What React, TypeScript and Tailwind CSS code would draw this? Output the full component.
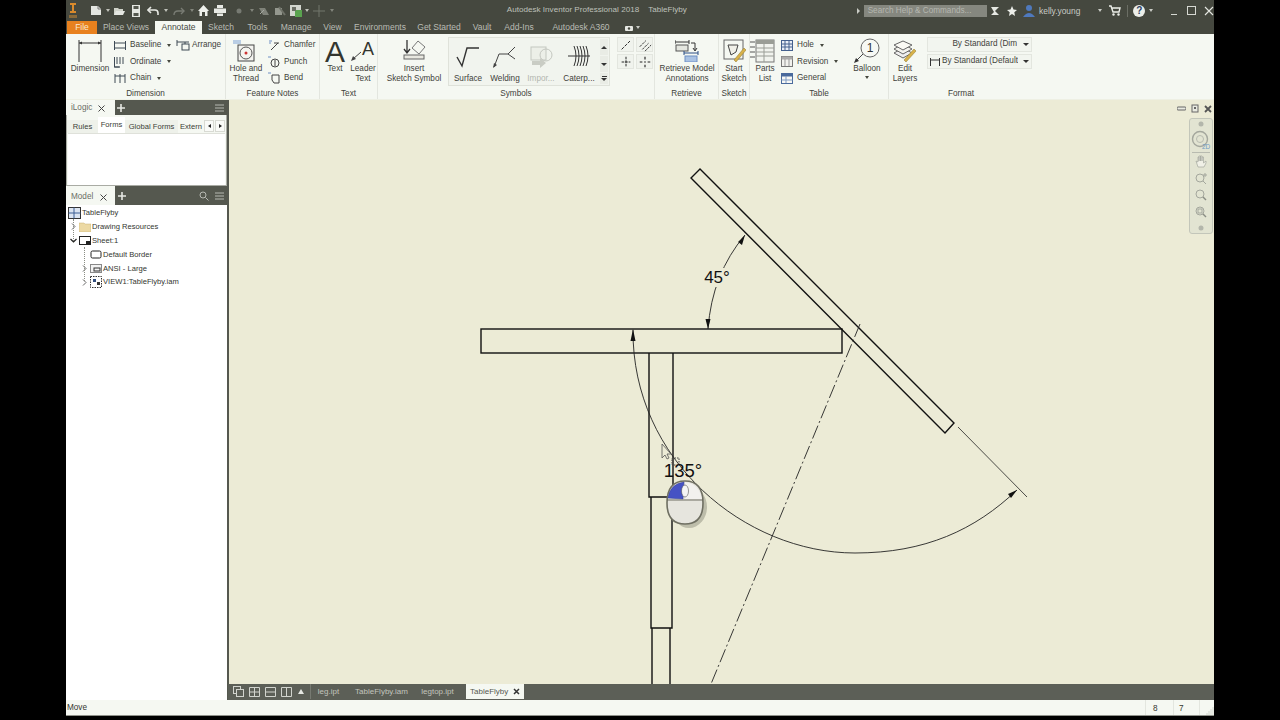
import React from "react";

const font = { fontFamily: '"Liberation Sans", Arial, sans-serif' };

function Caret({ className = "" }: { className?: string }) {
  return <span className={`inline-block w-0 h-0 border-l-[2px] border-r-[2px] border-t-[3px] border-l-transparent border-r-transparent border-t-current ${className}`} />;
}

function Ic({ w = 12, h = 12, vb, children, className = "" }: { w?: number; h?: number; vb?: string; children: React.ReactNode; className?: string }) {
  return (
    <svg width={w} height={h} viewBox={vb ?? `0 0 ${w} ${h}`} fill="none" className={`shrink-0 ${className}`}>
      {children}
    </svg>
  );
}

/* ---------- quick access icons ---------- */
const Q = {
  logo: (
    <Ic w={12} h={20}>
      <path d="M3 3h6M3 11h6M6 3v8" stroke="#d98a2c" strokeWidth="2" />
      <rect x="2" y="14" width="8" height="3" fill="#8a6a3a" />
    </Ic>
  ),
  doc: <Ic w={12} h={11}><path d="M1 1h7l3 3v6H1z" fill="#e4e6e1" /><path d="M8 1v3h3" stroke="#777" /></Ic>,
  open: <Ic w={12} h={10}><path d="M1 2h4l1 1h4v2H4L2 9H1z" fill="#cfd2c9" /><path d="M3 5h9l-2 4H1z" fill="#e4e6e1" /></Ic>,
  save: <Ic w={10} h={12}><rect x="1" y="0" width="8" height="12" fill="#e6e8e3" /><rect x="2.5" y="1" width="5" height="3" fill="#55584f" /><rect x="2.5" y="8" width="5" height="3" fill="#55584f" /></Ic>,
  undo: <Ic w={12} h={10}><path d="M4 1 1 4l3 3" stroke="#e6e8e3" strokeWidth="1.6" /><path d="M1.5 4H8q3 0 3 3v2" stroke="#e6e8e3" strokeWidth="1.6" /></Ic>,
  redo: <Ic w={12} h={10}><path d="M8 2l3 3-3 3" stroke="#797c74" strokeWidth="1.4" /><path d="M10.5 5H5Q1 5 1 9" stroke="#797c74" strokeWidth="1.4" /></Ic>,
  home: <Ic w={11} h={11}><path d="M5.5 0 11 6H9.5v5H7V7H4v4H1.5V6H0z" fill="#eef0ec" /></Ic>,
  print: <Ic w={12} h={11}><rect x="3" y="0" width="6" height="3" fill="#e8eae5" /><rect x="0" y="3.5" width="12" height="4.5" fill="#e8eae5" /><rect x="3" y="8.5" width="6" height="2.5" fill="#e8eae5" /></Ic>,
  dot: <Ic w={8} h={8}><circle cx="4" cy="4" r="2.5" fill="#777a72" /></Ic>,
  a: <Ic w={12} h={10}><path d="M1 2h6l4 7H5z" fill="#7f8279" /><path d="M2 8l4-4" stroke="#a4a79f" /></Ic>,
  b: <Ic w={12} h={10}><rect x="1" y="2" width="7" height="7" fill="#94978e" /><path d="M5 1l6 8" stroke="#6e7168" strokeWidth="2" /></Ic>,
  c: <Ic w={13} h={14}><rect x="0" y="1" width="11" height="11" fill="#d3d6cf" /><rect x="5" y="6" width="7" height="7" fill="#5aa34f" /><rect x="2" y="3" width="4" height="4" fill="#6c6f66" /></Ic>,
  plus: <Ic w={12} h={12}><path d="M6 0v12M0 6h12" stroke="#73766d" /></Ic>,
};

function Slot({ c, w }: { c: React.ReactNode; w: string }) {
  return <div className={`flex items-center justify-center ${w}`}>{c}</div>;
}

function TitleBar() {
  return (
    <div className="h-[21px] bg-[#45483f] flex items-center text-[#c9cbc5] relative">
      <Slot w="w-[1px]" c={null} />
      <Slot w="w-[12px]" c={Q.logo} />
      <Slot w="w-[11px]" c={null} />
      <Slot w="w-[13px]" c={Q.doc} />
      <Slot w="w-[10px]" c={<Caret className="text-[#bfc1ba]" />} />
      <Slot w="w-[14px]" c={Q.open} />
      <Slot w="w-[20px]" c={Q.save} />
      <Slot w="w-[14px]" c={Q.undo} />
      <Slot w="w-[12px]" c={<Caret className="text-[#bfc1ba]" />} />
      <Slot w="w-[15px]" c={Q.redo} />
      <Slot w="w-[11px]" c={<Caret className="text-[#82857c]" />} />
      <Slot w="w-[13px]" c={Q.home} />
      <Slot w="w-[19px]" c={Q.print} />
      <Slot w="w-[19px]" c={Q.dot} />
      <Slot w="w-[9px]" c={<Caret className="text-[#82857c]" />} />
      <Slot w="w-[15px]" c={Q.a} />
      <Slot w="w-[17px]" c={Q.b} />
      <Slot w="w-[16px]" c={Q.c} />
      <Slot w="w-[6px]" c={<Caret className="text-[#bfc1ba]" />} />
      <Slot w="w-[17px]" c={Q.plus} />
      <Slot w="w-[11px]" c={<Caret className="text-[#82857c]" />} />
      <div className="w-[171px]" />
      <div className="w-[300px] text-[8.1px] leading-none text-[#bec0ba] whitespace-nowrap">
        Autodesk Inventor Professional 2018<span className="ml-[9px]">TableFlyby</span>
      </div>
      <div className="w-[54px]" />
      <span className="w-0 h-0 border-y-[3px] border-l-[3px] border-y-transparent border-l-[#c9cbc5] mr-[4px]" />
      <div className="w-[125px] h-[12px] bg-[#85877f] text-[#b5b7b0] text-[8.2px] leading-[12px] pl-[4px] whitespace-nowrap overflow-hidden">Search Help &amp; Commands...</div>
      <div className="w-[3px]" />
      <Ic w={10} h={10}><path d="M1 1h8L5 5l4 4H1l3-3" fill="#e6e8e3" /></Ic>
      <div className="w-[7px]" />
      <Ic w={10} h={10}><path d="M5 0l1.5 3.5L10 4 7.3 6.3 8 10 5 8 2 10l.7-3.7L0 4l3.5-.5z" fill="#eceee9" /></Ic>
      <div className="w-[6px]" />
      <Ic w={12} h={13}><circle cx="6" cy="4" r="3" fill="#4f79bd" /><path d="M0 13q6-8 12 0z" fill="#4f79bd" /></Ic>
      <span className="ml-[4px] mt-[1px] w-[60px] text-[8.4px] leading-none text-[#c9cbc5]">kelly.young</span>
      <Caret className="text-[#c9cbc5] mr-[7px]" />
      <Ic w={12} h={11}><path d="M0 1h2l2 6h6l1-4H3" stroke="#eceee9" strokeWidth="1.4" /><circle cx="4.5" cy="9.5" r="1.2" fill="#eceee9" /><circle cx="9.5" cy="9.5" r="1.2" fill="#eceee9" /></Ic>
      <div className="ml-[6px] mr-[5px] w-px h-[12px] bg-[#6b6e65]" />
      <div className="w-[12px] h-[12px] rounded-full bg-[#eceee9] text-[#2c3e66] text-[10px] font-bold leading-[12px] text-center">?</div>
      <Caret className="text-[#c9cbc5] ml-[4px] mr-[18px]" />
      <div className="w-[6px] h-px bg-[#d6d8d2] mt-[7px] mr-[10px]" />
      <div className="w-[9px] h-[9px] border border-[#d6d8d2] mr-[8px]" />
      <Ic w={10} h={10}><path d="M1 1l8 8M9 1 1 9" stroke="#e6e8e3" strokeWidth="1.1" /></Ic>
    </div>
  );
}

function TabBar() {
  const tabs: [string, string][] = [
    ["Place Views", "w-[58px]"],
    ["Annotate", "w-[47px]"],
    ["Sketch", "w-[38px]"],
    ["Tools", "w-[35px]"],
    ["Manage", "w-[42px]"],
    ["View", "w-[31px]"],
    ["Environments", "w-[64px]"],
    ["Get Started", "w-[54px]"],
    ["Vault", "w-[32px]"],
    ["Add-Ins", "w-[42px]"],
    ["Autodesk A360", "w-[82px]"],
  ];
  return (
    <div className="h-[13px] bg-[#45483f] flex items-stretch text-[8.5px] leading-[13px] text-center text-[#b9bbb4]">
      <div className="w-px" />
      <div className="w-[30px] bg-[#e8811e] text-[#fbe9d2]">File</div>
      {tabs.map(([t, w]) => (
        <div key={t} className={`${w} whitespace-nowrap ${t === "Annotate" ? "bg-[#f5f8f2] text-[#45483f]" : ""}`}>{t}</div>
      ))}
      <div className="flex items-center ml-[3px] gap-[3px]">
        <Ic w={8} h={6}><rect x="0" y="1" width="8" height="5" rx="1" fill="#e6e8e3" /><circle cx="4" cy="3.5" r="1.2" fill="#45483f" /></Ic>
        <Caret className="text-[#c9cbc5]" />
      </div>
    </div>
  );
}

/* ---------- ribbon ---------- */
function Big({ icon, lines, w, caret, tall, muted }: { icon: React.ReactNode; lines: string[]; w: string; caret?: boolean; tall?: boolean; muted?: boolean }) {
  return (
    <div className={`${w} flex flex-col items-center shrink-0`}>
      <div className={`${tall ? "h-[36px]" : "h-[27px]"} flex items-center justify-center`}>{icon}</div>
      <div className={`text-[8.2px] leading-[10px] text-center whitespace-nowrap ${muted ? "text-[#b3b6ae]" : "text-[#3f423b]"}`}>
        {lines.map((l) => <div key={l}>{l}</div>)}
      </div>
      {caret && <Caret className="text-[#45483f] mt-[2px]" />}
    </div>
  );
}

function Small({ icon, text, caret }: { icon: React.ReactNode; text: string; caret?: boolean }) {
  return (
    <div className="h-[16.5px] flex items-center whitespace-nowrap text-[8.2px] text-[#3f423b]">
      <span className="w-[16px] flex justify-start">{icon}</span>
      <span>{text}</span>
      {caret && <Caret className="ml-[6px] text-[#45483f]" />}
    </div>
  );
}

function Group({ label, w, children, last }: { label: string; w: string; children: React.ReactNode; last?: boolean }) {
  return (
    <div className={`${w} shrink-0 flex flex-col ${last ? "" : "border-r border-[#e3e6df]"}`}>
      <div className="h-[53px] flex items-start pt-[3px]">{children}</div>
      <div className="text-[8.2px] leading-[11px] mt-[1px] text-center text-[#3f423b]">{label}</div>
    </div>
  );
}

const ink = "#3e4a55";
const I = {
  dim: <Ic w={24} h={22}><path d="M1 3h22" stroke="#333" /><path d="M1 3l3-1.5v3zM23 3l-3-1.5v3z" fill="#333" /><path d="M1 0v22" stroke="#333" /><path d="M23 0v22" stroke="#333" /></Ic>,
  base: <Ic w={12} h={11}><path d="M.5 1v9M11.5 1v9M.5 3h11M.5 8h11" stroke={ink} /></Ic>,
  ord: <Ic w={12} h={12}><path d="M.5 1v10h5M3 1v7M6 1v7M9 1v7M0 11h6" stroke={ink} /></Ic>,
  chain: <Ic w={12} h={11}><path d="M1 1v9M6 1v9M11 1v9M1 3h10" stroke={ink} /></Ic>,
  arr: <Ic w={14} h={12}><path d="M1 1v6M1 3h12" stroke={ink} /><rect x="6" y="5" width="7" height="6" stroke={ink} /><path d="M9 3v2" stroke={ink} /></Ic>,
  hole: (
    <Ic w={26} h={22}>
      <path d="M0 1h8M0 3h8" stroke="#7fa3d6" />
      <rect x="5" y="5" width="16" height="16" stroke="#444" fill="#f4f4f0" />
      <circle cx="13" cy="13" r="6" stroke="#555" />
      <circle cx="13" cy="13" r="1.5" fill="#cc3333" />
    </Ic>
  ),
  cham: <Ic w={12} h={11}><path d="M1 1h3M1 3h2" stroke="#6f8fc4" /><path d="M3 10l7-7M6 3h5" stroke="#444" /></Ic>,
  punch: <Ic w={12} h={12}><path d="M0 1h3" stroke="#6f8fc4" /><circle cx="7" cy="7" r="4" stroke="#444" /><path d="M7 4v6" stroke="#444" /></Ic>,
  bend: <Ic w={12} h={12}><path d="M0 1h3" stroke="#6f8fc4" /><path d="M4 3h7v8H6L4 8z" stroke="#444" /></Ic>,
  bigA: <Ic w={24} h={24} className="overflow-visible"><text x="12" y="23" textAnchor="middle" fontSize="30" fill="#33362f" style={font}>A</text></Ic>,
  leader: (
    <Ic w={26} h={24} className="overflow-visible">
      <path d="M3 20 11 13" stroke="#444" />
      <path d="M1 22l2-5 3 3z" fill="#444" />
      <text x="18" y="16" textAnchor="middle" fontSize="18" fill="#33362f" style={font}>A</text>
    </Ic>
  ),
  sketch: (
    <Ic w={24} h={22}>
      <path d="M5 0v12M2 9l3 4 3-4" stroke="#333" strokeWidth="1.3" />
      <path d="M16 1l7 6-6 7-7-6z" stroke="#777" />
      <rect x="2" y="15" width="20" height="4" stroke="#666" fill="#e8e8e0" />
    </Ic>
  ),
  surface: <Ic w={24} h={24}><path d="M1 13l5 9L11 4h12" stroke="#333" strokeWidth="1.4" /></Ic>,
  weld: <Ic w={24} h={24}><path d="M1 23 6 10h9l7-7M15 10l7 5" stroke="#444" /><path d="M0 24l1-5 3 2z" fill="#444" /></Ic>,
  imp: <Ic w={24} h={24}><rect x="2" y="3" width="15" height="13" stroke="#c4c7c0" fill="#ecefe8" /><circle cx="17" cy="11" r="6" stroke="#c4c7c0" /><path d="M3 17h8v-3l6 5-6 5v-3H3z" fill="#c9ccc4" /></Ic>,
  cat: <Ic w={22} h={22}><path d="M0 11h22" stroke="#333" /><path d="M6 1q4 10 0 20M9 1q4 10 0 20M12 1q4 10 0 20M15 1q4 10 0 20M18 1q4 10 0 20" stroke="#333" /></Ic>,
  retrieve: (
    <Ic w={24} h={22}>
      <path d="M0 2h14M0 0v4M14 0v4" stroke="#333" />
      <rect x="1" y="5" width="12" height="6" fill="#e4e6df" stroke="#555" />
      <path d="M16 3h4v7M18 8l2 3 2-3" stroke="#333" />
      <path d="M9 13h14M9 11v4M23 11v4" stroke="#2b4f86" />
      <rect x="10" y="16" width="12" height="6" fill="#a9c2e3" stroke="#6f8fc4" />
    </Ic>
  ),
  start: (
    <Ic w={24} h={24}>
      <rect x="2" y="1" width="19" height="19" stroke="#666" />
      <path d="M6 6h10l-2 7-5 3z" stroke="#444" fill="#f0f0e8" />
      <path d="M12 21 22 9l2 2-10 12z" fill="#d8b24a" stroke="#8d7428" strokeWidth=".5" />
    </Ic>
  ),
  parts: (
    <Ic w={30} h={24}>
      <path d="M0 3h5M0 8h5M0 13h5M0 18h5" stroke="#555" />
      <rect x="6" y="1" width="18" height="22" fill="#f1f3ee" stroke="#777" />
      <rect x="6" y="1" width="18" height="4" fill="#9a9d96" />
      <path d="M6 9h18M6 13h18M6 17h18M14 1v22" stroke="#9a9d96" />
    </Ic>
  ),
  tHole: <Ic w={12} h={11}><rect x=".5" y=".5" width="11" height="10" fill="#e9eef6" stroke="#44608e" /><path d="M.5 4h11M.5 7h11M4 .5v10M8 .5v10" stroke="#44608e" /></Ic>,
  tRev: <Ic w={12} h={11}><rect x=".5" y=".5" width="11" height="10" fill="#f2f2ee" stroke="#777" /><rect x=".5" y=".5" width="11" height="3" fill="#aaa" /><path d="M4 3v7M8 3v7" stroke="#999" /></Ic>,
  tGen: <Ic w={12} h={11}><rect x=".5" y=".5" width="11" height="10" fill="#f8f8f4" stroke="#4a6a9c" /><rect x=".5" y=".5" width="11" height="3" fill="#4a6a9c" /><path d="M.5 7h11M5 3v7" stroke="#7f9bc4" /></Ic>,
  balloon: (
    <Ic w={26} h={26}>
      <circle cx="16" cy="10" r="9" stroke="#666" fill="#f7f9f4" />
      <path d="M9 16 2 23" stroke="#444" />
      <path d="M0 25l2-5 3 3z" fill="#333" />
      <text x="16" y="14" textAnchor="middle" fontSize="12" fill="#333" style={font}>1</text>
    </Ic>
  ),
  layers: (
    <Ic w={24} h={22}>
      <path d="M1 13l9-5 9 5-9 5z" stroke="#666" fill="#eee" />
      <path d="M1 9l9-5 9 5-9 5z" stroke="#666" fill="#f4f4ee" />
      <path d="M1 5l9-4 9 4-9 5z" stroke="#666" fill="#fafaf4" />
      <path d="M11 20l10-11 2 2-10 11z" fill="#d8b24a" stroke="#8d7428" strokeWidth=".5" />
    </Ic>
  ),
};

const tiles = [
  <path key="a" d="M3 13 13 3" stroke="#222" strokeWidth="1.1" strokeDasharray="3.5 1.5" />,
  <path key="b" d="M2 10l7-7M5 13l7-7M8 15l7-7" stroke="#333" strokeWidth="1.1" strokeDasharray="3 1" />,
  <path key="c" d="M8 2v12M3 8h10" stroke="#222" strokeWidth="1.1" strokeDasharray="3 1" />,
  <path key="d" d="M8 2v3M8 11v3M2 8h3M11 8h3M7 8h2" stroke="#222" strokeWidth="1.3" />,
];

function Ribbon() {
  return (
    <div className="h-[66px] bg-[#f5f8f2] flex border-b border-[#eef0e4]">
      <Group label="Dimension" w="w-[160px]">
        <div className="pl-[2px]"><Big w="w-[44px]" icon={I.dim} lines={["Dimension"]} /></div>
        <div className="ml-[2px] w-[62px] shrink-0">
          <Small icon={I.base} text="Baseline" caret />
          <Small icon={I.ord} text="Ordinate" caret />
          <Small icon={I.chain} text="Chain" caret />
        </div>
        <div><Small icon={I.arr} text="Arrange" /></div>
      </Group>
      <Group label="Feature Notes" w="w-[94px]">
        <Big w="w-[40px]" icon={I.hole} lines={["Hole and", "Thread"]} />
        <div className="ml-[2px]">
          <Small icon={I.cham} text="Chamfer" />
          <Small icon={I.punch} text="Punch" />
          <Small icon={I.bend} text="Bend" />
        </div>
      </Group>
      <Group label="Text" w="w-[58px]">
        <Big w="w-[30px]" icon={I.bigA} lines={["Text"]} />
        <Big w="w-[26px]" icon={I.leader} lines={["Leader", "Text"]} />
      </Group>
      <Group label="Symbols" w="w-[277px]">
        <div className="w-[70px] shrink-0 pl-[1px]"><Big w="w-[70px]" icon={I.sketch} lines={["Insert", "Sketch Symbol"]} /></div>
        <div className="w-[162px] h-[49px] bg-[#f1f4ee] border border-[#dfe2da] flex shrink-0">
          <Big tall w="w-[38px]" icon={I.surface} lines={["Surface"]} />
          <Big tall w="w-[36px]" icon={I.weld} lines={["Welding"]} />
          <Big tall muted w="w-[36px]" icon={I.imp} lines={["Impor..."]} />
          <Big tall w="w-[40px]" icon={I.cat} lines={["Caterp..."]} />
          <div className="flex-1 flex flex-col text-[#333] gap-px p-px">
            <div className="flex-[3] bg-[#e9ece5] flex items-center justify-center"><span className="w-0 h-0 border-x-[3px] border-b-[3px] border-x-transparent border-b-current" /></div>
            <div className="flex-[3] bg-[#e9ece5] flex items-center justify-center"><Caret className="border-l-[3px] border-r-[3px]" /></div>
            <div className="flex-[2] bg-[#e9ece5] flex flex-col items-center justify-center"><div className="w-[5px] h-px bg-current mb-px" /><Caret className="border-l-[3px] border-r-[3px]" /></div>
          </div>
        </div>
        <div className="ml-[7px] grid grid-cols-2 gap-[2px] w-[36px] shrink-0">
          {tiles.map((p) => (
            <div key={p.key} className="h-[15px] bg-[#f0f3ed] border border-[#e3e6df] flex items-center justify-center">
              <Ic w={14} h={14} vb="0 0 16 16">{p}</Ic>
            </div>
          ))}
        </div>
      </Group>
      <Group label="Retrieve" w="w-[64px]"><Big w="w-[64px]" icon={I.retrieve} lines={["Retrieve Model", "Annotations"]} /></Group>
      <Group label="Sketch" w="w-[31px]"><Big w="w-[30px]" icon={I.start} lines={["Start", "Sketch"]} /></Group>
      <Group label="Table" w="w-[139px]">
        <div className="w-[30px] shrink-0"><Big w="w-[30px]" icon={I.parts} lines={["Parts", "List"]} /></div>
        <div className="ml-[1px] w-[64px] shrink-0">
          <Small icon={I.tHole} text="Hole" caret />
          <Small icon={I.tRev} text="Revision" caret />
          <Small icon={I.tGen} text="General" />
        </div>
        <Big w="w-[44px]" icon={I.balloon} lines={["Balloon"]} caret />
      </Group>
      <Group label="Format" w="w-[144px]" last>
        <div className="ml-[3px]"><Big w="w-[26px]" icon={I.layers} lines={["Edit", "Layers"]} /></div>
        <div className="ml-[9px] w-[105px] flex flex-col gap-[2px] text-[8.2px] text-[#3f423b]">
          <div className="h-[15px] bg-[#f2f5ef] border border-[#e3e6df] flex items-center justify-end pr-[2px] whitespace-nowrap">
            <span className="w-[76px] text-right overflow-hidden">By Standard (Dim</span><Caret className="ml-[6px] text-[#333] border-l-[3px] border-r-[3px]" />
          </div>
          <div className="h-[15px] bg-[#f2f5ef] border border-[#e3e6df] flex items-center pl-[2px] pr-[2px] whitespace-nowrap">
            <Ic w={10} h={9} className="mr-[2px]"><path d="M.5 1v8M9.5 1v8M.5 3h9" stroke="#333" /></Ic>
            <span className="w-[76px] overflow-hidden">By Standard (Default</span><Caret className="ml-auto text-[#333] border-l-[3px] border-r-[3px]" />
          </div>
        </div>
      </Group>
    </div>
  );
}

/* ---------- side panels ---------- */
function PanelHead({ name, search, h, pt, pr, plus }: { name: string; search?: boolean; h: string; pt: string; pr: string; plus: string }) {
  return (
    <div className={`${h} flex items-stretch bg-[#55584f]`}>
      <div className={`w-[49px] bg-[#f5f8f2] flex items-center text-[8.2px] text-[#6a6d65] pl-[5px] justify-between ${pt} ${pr}`}>
        {name}
        <Ic w={7} h={7}><path d="M.5.5l6 6M6.5.5l-6 6" stroke="#444" /></Ic>
      </div>
      <Ic w={8} h={8} className={`self-center ${plus}`}><path d="M4 0v8M0 4h8" stroke="#e6e8e3" strokeWidth="1.6" /></Ic>
      <div className="flex-1" />
      {search && (
        <Ic w={10} h={10} className="self-center mr-[6px]"><circle cx="4" cy="4" r="3" stroke="#b7b9b3" /><path d="M6.5 6.5l3 3" stroke="#b7b9b3" /></Ic>
      )}
      <Ic w={9} h={8} className="self-center mr-[3px]"><path d="M0 1h9M0 4h9M0 7h9" stroke="#b7b9b3" /></Ic>
    </div>
  );
}

function TreeRow({ pad, icon, text, arrow }: { pad: string; icon: React.ReactNode; text: string; arrow?: "r" | "d" }) {
  return (
    <div className={`h-[13.8px] flex items-center whitespace-nowrap ${pad}`}>
      <span className="w-[8px] shrink-0 flex justify-center">
        {arrow === "r" && <Ic w={5} h={7}><path d="M1 .5l3 3-3 3" stroke="#666" /></Ic>}
        {arrow === "d" && <Ic w={7} h={5}><path d="M.5 1l3 3 3-3" stroke="#222" strokeWidth="1.2" /></Ic>}
      </span>
      <span className="w-[12px] ml-[2px] shrink-0 flex justify-center">{icon}</span>
      <span className="ml-[1px]">{text}</span>
    </div>
  );
}

function Left() {
  return (
    <div className="w-[162px] shrink-0 flex flex-col bg-white border-r border-[#55584f] text-[#3a3d36]">
      <PanelHead name="iLogic" h="h-[15px]" pt="pt-[2px]" pr="pr-[10px]" plus="ml-[2px]" />
      <div className="h-[71px] bg-[#f5f8f2] border-x border-b border-[#a9aba4] flex flex-col">
        <div className="h-[18px] flex items-end text-[7.6px] leading-[13px] relative whitespace-nowrap overflow-hidden">
          <div className="w-[31px] text-center h-[13px] bg-[#eef1ea]">Rules</div>
          <div className="w-[27px] text-center h-[16px] bg-white pt-[1px]">Forms</div>
          <div className="w-[53px] text-center h-[13px] bg-[#eef1ea]">Global Forms</div>
          <div className="w-[26px] pl-[2px] h-[13px] overflow-hidden">Extern</div>
          <div className="flex gap-[1px] mb-[1px]">
            <div className="w-[10px] h-[12px] bg-[#fafbf8] border border-[#d8dad3] flex items-center justify-center"><span className="w-0 h-0 border-y-[2px] border-r-[3px] border-y-transparent border-r-[#222]" /></div>
            <div className="w-[10px] h-[12px] bg-[#fafbf8] border border-[#d8dad3] flex items-center justify-center"><span className="w-0 h-0 border-y-[2px] border-l-[3px] border-y-transparent border-l-[#222]" /></div>
          </div>
        </div>
        <div className="flex-1 bg-white border-t border-[#dfe1da] mx-px" />
      </div>
      <PanelHead name="Model" search h="h-[19px]" pt="pt-[3px]" pr="pr-[8px]" plus="ml-[3px]" />
      <div className="flex-1 pt-[1px] text-[7.6px] text-[#33362f] relative">
        <div className="absolute left-[7px] top-[14px] h-[24px] border-l border-dotted border-[#8a8d84]" />
        <div className="absolute left-[18px] top-[42px] h-[34px] border-l border-dotted border-[#8a8d84]" />
        <div className="h-[14px] flex items-center pl-[2px] whitespace-nowrap">
          <Ic w={13} h={12}><rect x=".5" y=".5" width="12" height="11" fill="#dbe4f1" stroke="#333" /><path d="M.5 6h12M6 .5v11" stroke="#3c5e94" /></Ic>
          <span className="ml-[1px]">TableFlyby</span>
        </div>
        <TreeRow pad="pl-[3px]" arrow="r" text="Drawing Resources" icon={<Ic w={12} h={10}><path d="M0 1h5l1 1h6v8H0z" fill="#ecd9a4" stroke="#c9b077" strokeWidth=".5" /></Ic>} />
        <TreeRow pad="pl-[3px]" arrow="d" text="Sheet:1" icon={<Ic w={12} h={9}><rect x=".5" y=".5" width="11" height="8" fill="#fff" stroke="#222" /><rect x="7" y="5" width="4" height="3" fill="#222" /></Ic>} />
        <TreeRow pad="pl-[14px]" text="Default Border" icon={<Ic w={12} h={9}><rect x="1" y="1" width="10" height="7" rx="1.5" fill="#fff" stroke="#222" /></Ic>} />
        <TreeRow pad="pl-[14px]" arrow="r" text="ANSI - Large" icon={<Ic w={12} h={9}><rect x=".5" y=".5" width="11" height="8" fill="#f2f2f2" stroke="#888" /><rect x="4" y="4" width="6" height="3" stroke="#333" /></Ic>} />
        <TreeRow pad="pl-[14px]" arrow="r" text="VIEW1:TableFlyby.iam" icon={<Ic w={12} h={12}><rect x=".5" y=".5" width="11" height="11" stroke="#333" strokeDasharray="1.5 1" /><rect x="3" y="3" width="3" height="3" fill="#2f4c7c" /><rect x="7" y="6" width="3" height="3" fill="#333" /></Ic>} />
      </div>
    </div>
  );
}

/* ---------- drawing ---------- */
function Drawing() {
  const k = "#111";
  return (
    <svg viewBox="229 100 985 584" className="block w-full h-full absolute inset-0" fill="none" style={font}>
      <polygon points="691,178 700,169 954,423 945,433" stroke={k} strokeWidth="1.4" />
      <rect x="481" y="329" width="361" height="24" stroke={k} strokeWidth="1.4" />
      <path d="M649 353V497H673V353M651 497V628H672V497M652 628V684M670 628V684" stroke={k} strokeWidth="1.4" />
      <path d="M860 324L711 684" stroke="#222" strokeWidth=".9" strokeDasharray="14 3 2 3" />
      <path d="M958 427L1027 497" stroke="#222" strokeWidth=".8" />
      <path d="M708 329Q712 274 745 235" stroke="#222" strokeWidth=".9" />
      <path d="M708 329l-2.5-10h5zM745 235l-3 10 -4-3z" fill={k} />
      <path d="M633 330C632 460 745 553 855 553C925 553 975 530 1017 490" stroke="#222" strokeWidth=".9" />
      <path d="M633 329l-2.5 12h5zM1017 490l-9 4 3 4z" fill={k} />
      <rect x="703" y="268" width="28" height="19" fill="#ecebd6" />
      <text x="717" y="283" textAnchor="middle" fontSize="17" fill={k}>45°</text>
      {/* cursor */}
      <path d="M662 444v14l3-3 2 4 2-1-2-4h4z" fill="#ecebd6" stroke="#555" strokeWidth=".8" />
      <path d="M672 458h7v7h-7z" stroke="#444" strokeWidth="1" strokeDasharray="1.5 1" />
      <text x="683" y="477" textAnchor="middle" fontSize="18.5" fill={k}>135°</text>
      {/* mouse */}
      <ellipse cx="689" cy="507" rx="18" ry="21" fill="#77786a" opacity=".4" />
      <path d="M667 503q0-22 18-22t18 22q0 21-18 21t-18-21z" fill="#e6e5de" stroke="#6f6f62" strokeWidth="1.6" />
      <path d="M685 482q14 2 17 17h-17z" fill="#f2f1ee" />
      <path d="M668 498q2-14 16-16l-1 17z" fill="#4652c4" stroke="#2f3a94" strokeWidth=".5" />
      <path d="M667 500h36" stroke="#6f6f62" strokeWidth="1.1" />
      <ellipse cx="685" cy="491" rx="3.5" ry="6" fill="#f5f5f5" stroke="#555" strokeWidth=".6" />
    </svg>
  );
}

function NavBar() {
  return (
    <div className="absolute right-[1px] top-[18px] w-[24px] h-[116px] rounded-[3px] border border-[#c3c6ba] bg-[#e2e4d2] flex flex-col items-center pt-[2px] pb-[2px]">
      <Ic w={6} h={6}><circle cx="3" cy="3" r="2.5" fill="#b3b6ab" /></Ic>
      <Ic w={20} h={20} className="mt-[3px]"><circle cx="9" cy="9" r="7.5" stroke="#a4a79d" strokeWidth="1.4" /><circle cx="9" cy="9" r="3.5" stroke="#b8bbb0" /><text x="11" y="19" fontSize="6.5" fill="#6f9cc4" style={font}>2D</text></Ic>
      <div className="w-[18px] h-px bg-[#b8bbb0] mt-[2px]" />
      <div className="flex flex-col items-center gap-[4px] mt-[2px] text-[#a4a79d]">
        <Ic w={12} h={13}><path d="M3 12 1 6l2 1V2h1v4V1h1.5v5V1H7v5V2h1.5v6L11 6v2l-2 4z" fill="#f0f0e6" stroke="#a4a79d" strokeWidth=".7" /></Ic>
        <Ic w={12} h={13}><circle cx="5" cy="6" r="4" stroke="#a4a79d" /><path d="M8 9l3 3M10 1v4M8 3h4" stroke="#a4a79d" /></Ic>
        <Ic w={12} h={13}><circle cx="5" cy="5" r="4" stroke="#a4a79d" /><path d="M8 8l3 3" stroke="#8a8d84" strokeWidth="1.4" /></Ic>
        <Ic w={12} h={13}><circle cx="5" cy="5" r="4" stroke="#a4a79d" /><rect x="3" y="3" width="4" height="4" stroke="#a4a79d" /><path d="M8 8l3 3" stroke="#8a8d84" strokeWidth="1.4" /></Ic>
      </div>
      <Ic w={6} h={6} className="mt-auto"><circle cx="3" cy="3" r="2.5" fill="#b3b6ab" /></Ic>
    </div>
  );
}

function Canvas() {
  return (
    <div className="flex-1 relative bg-[#ecebd6] overflow-hidden">
      <Drawing />
      <div className="absolute top-[4px] right-[2px] flex items-center gap-[5px]">
        <Ic w={9} h={7}><rect x="0" y="2" width="9" height="3" rx="1" fill="#e9eae0" stroke="#666" /></Ic>
        <Ic w={8} h={9}><rect x="1" y="1" width="6" height="7" fill="#e9eae0" stroke="#666" /><rect x="3" y="3" width="2" height="2" fill="#666" /></Ic>
        <Ic w={8} h={8}><path d="M1 1l6 6M7 1 1 7" stroke="#555" strokeWidth="1.8" /></Ic>
      </div>
      <NavBar />
    </div>
  );
}

function DocBar() {
  const tabs: [string, string][] = [
    ["leg.ipt", "w-[35px]"],
    ["TableFlyby.iam", "w-[71px]"],
    ["legtop.ipt", "w-[41px]"],
  ];
  return (
    <div className="h-[16px] bg-[#5c5f57] flex items-stretch text-[8px] leading-[16px] text-[#c2c4bd] border-b border-[#5c5f57]">
      <div className="flex items-center gap-[5px] pl-[5px] pr-[6px] border-r border-[#777a72]">
        <Ic w={11} h={11}><rect x=".5" y=".5" width="7" height="7" stroke="#d2d4ce" /><rect x="3.5" y="3.5" width="7" height="7" stroke="#d2d4ce" fill="#5c5f57" /></Ic>
        <Ic w={11} h={10}><path d="M.5.5h10v9H.5zM.5 5h10M5.5.5v9" stroke="#d2d4ce" /></Ic>
        <Ic w={11} h={10}><path d="M.5.5h10v9H.5zM.5 5h10" stroke="#d2d4ce" /></Ic>
        <Ic w={11} h={10}><path d="M.5.5h10v9H.5zM5.5.5v9" stroke="#d2d4ce" /></Ic>
        <span className="w-0 h-0 ml-[1px] border-x-[3px] border-b-[5px] border-x-transparent border-b-[#e6e8e3]" />
      </div>
      {tabs.map(([t, w]) => (
        <div key={t} className={`${w} text-center whitespace-nowrap`}>{t}</div>
      ))}
      <div className="w-[58px] ml-[8px] bg-[#f5f8f2] text-[#55584f] flex items-center pl-[4px] gap-[5px] whitespace-nowrap">
        TableFlyby
        <Ic w={7} h={7}><path d="M1 1l5 5M6 1 1 6" stroke="#333" strokeWidth="1.5" /></Ic>
      </div>
    </div>
  );
}

function Status() {
  return (
    <div className="h-[16px] bg-[#f5f8f2] flex items-center text-[8.2px] text-[#33362f] border-b-[1px] border-[#8f918a]">
      <span className="pl-[1px] pt-[2px] flex-1">Move</span>
      <div className="w-[28px] h-full border-l border-[#e3e6df] pl-[7px] leading-[17px]">8</div>
      <div className="w-[27px] h-full border-x border-[#e3e6df] pl-[5px] leading-[17px]">7</div>
      <div className="w-[14px] h-full flex items-end justify-end">
        <Ic w={8} h={8}><path d="M7 1v0M5 3v0M7 3v0M3 5v0M5 5v0M7 5v0M1 7v0M3 7v0M5 7v0M7 7v0" stroke="#b3b6ab" strokeLinecap="square" /></Ic>
      </div>
    </div>
  );
}

export default function App() {
  return (
    <div className="w-[1280px] h-[720px] bg-black overflow-hidden flex" style={font}>
      <div className="w-[66px] shrink-0" />
      <div className="w-[1148px] shrink-0 h-[716px] flex flex-col">
        <TitleBar />
        <TabBar />
        <Ribbon />
        <div className="flex-1 flex min-h-0">
          <Left />
          <div className="flex-1 flex flex-col min-w-0">
            <div className="flex-1 flex min-h-0 border-l border-[#55584f]"><Canvas /></div>
            <DocBar />
          </div>
        </div>
        <Status />
      </div>
      <div className="flex-1" />
    </div>
  );
}
